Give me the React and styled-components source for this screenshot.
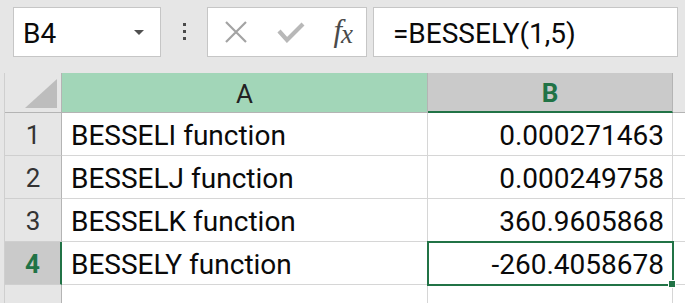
import React from "react";
import styled, { createGlobalStyle } from "styled-components";

const GREEN = "#217346";

const rows = [
  { label: "BESSELI function", value: "0.000271463" },
  { label: "BESSELJ function", value: "0.000249758" },
  { label: "BESSELK function", value: "360.9605868" },
  { label: "BESSELY function", value: "-260.4058678", active: true },
];

export default function App() {
  return (
    <Page>
      <GlobalStyle />
      <Toolbar>
        <NameBox>
          <span>B4</span>
          <Caret />
        </NameBox>
        <Grip>
          <Dot />
          <Dot />
          <Dot />
        </Grip>
        <IconBox>
          <svg width="24" height="22" viewBox="0 0 24 22">
            <path d="M2 1 L22 21 M22 1 L2 21" stroke="#a3a3a3" strokeWidth="2.2" fill="none" />
          </svg>
          <svg width="28" height="22" viewBox="0 0 28 22">
            <path d="M2 10 L10 19 L26 3" stroke="#b8b8b8" strokeWidth="4.2" fill="none" />
          </svg>
          <Fx>
            f<X>x</X>
          </Fx>
        </IconBox>
        <FormulaInput>=BESSELY(1,5)</FormulaInput>
      </Toolbar>

      <Sheet>
        <Corner>
          <svg width="32" height="29" viewBox="0 0 32 29">
            <polygon points="32,0 32,29 0,29" fill="#bdbdbd" />
          </svg>
        </Corner>
        <ColHeader $tone="green">A</ColHeader>
        <ColHeader $tone="selected">B</ColHeader>
        <ColHeader />

        {rows.map((row, i) => (
          <React.Fragment key={row.label}>
            <RowHeader $active={row.active}>{i + 1}</RowHeader>
            <Cell>{row.label}</Cell>
            <Cell $num $active={row.active}>
              {row.value}
              {row.active && <FillHandle />}
            </Cell>
            <Cell />
          </React.Fragment>
        ))}

        <RowHeader />
        <Cell />
        <Cell />
        <Cell />
      </Sheet>
    </Page>
  );
}

const GlobalStyle = createGlobalStyle`
  html, body {
    margin: 0;
    padding: 0;
    overflow: hidden;
  }
  body {
    font-family: Roboto, "Liberation Sans", sans-serif;
  }
`;

const Page = styled.div`
  width: 685px;
  height: 303px;
  overflow: hidden;
  background: #e6e6e6;
`;

const Toolbar = styled.div`
  display: flex;
  height: 50px;
  padding: 7px 7px 0 13px;
  margin-bottom: 16px;
`;

const Box = styled.div`
  box-sizing: border-box;
  height: 50px;
  background: #fff;
  border: 1px solid #c6c6c6;
  display: flex;
  align-items: center;
`;

const NameBox = styled(Box)`
  width: 148px;
  padding: 2px 16px 0 9px;
  justify-content: space-between;
  font-size: 28px;
  color: #0a0a0a;
`;

const Caret = styled.div`
  width: 0;
  height: 0;
  border-left: 5px solid transparent;
  border-right: 5px solid transparent;
  border-top: 5px solid #505050;
  margin-top: -2px;
`;

const Grip = styled.div`
  width: 46px;
  display: flex;
  flex-direction: column;
  align-items: center;
  justify-content: center;
  gap: 4px;
  padding-bottom: 2px;
`;

const Dot = styled.div`
  width: 3px;
  height: 3px;
  background: #4a4a4a;
`;

const IconBox = styled(Box)`
  width: 160px;
  padding: 0 14px 0 16px;
  justify-content: space-between;
`;

const Fx = styled.span`
  font-family: "Liberation Serif", "DejaVu Serif", serif;
  font-style: italic;
  font-size: 31px;
  color: #4a4a4a;
  line-height: 1;
  margin-top: -4px;
  letter-spacing: -1px;
`;

const X = styled.span`
  font-size: 27px;
  position: relative;
  top: 2px;
`;

const FormulaInput = styled(Box)`
  margin-left: 6px;
  flex: 1;
  padding: 2px 0 0 19px;
  font-size: 28px;
  color: #0a0a0a;
`;

const Sheet = styled.div`
  display: grid;
  grid-template-columns: 57px 366px 245px 1fr;
  grid-template-rows: 40px repeat(5, 43px);
  margin-left: 4px;
  border-left: 1px solid #cfcfcf;
  background: #fff;
`;

const HeaderBase = styled.div`
  box-sizing: border-box;
  display: flex;
  align-items: center;
  justify-content: center;
  border-right: 1px solid #b4b4b4;
  border-bottom: 1px solid #b4b4b4;
  background: #e6e6e6;
`;

const Corner = styled(HeaderBase)`
  justify-content: flex-end;
  align-items: flex-end;
  padding: 0 4px 4px 0;
`;

const ColHeader = styled(HeaderBase)`
  font-size: 26px;
  color: #222;
  padding-top: 2px;
  ${({ $tone }) =>
    $tone === "green" &&
    `
    background: #a2d6b8;
  `}
  ${({ $tone }) =>
    $tone === "selected" &&
    `
    background: #cacaca;
    color: ${GREEN};
    font-weight: 700;
    border-bottom: 2px solid ${GREEN};
  `}
`;

const RowHeader = styled(HeaderBase)`
  font-size: 26px;
  color: #333;
  padding-top: 2px;
  border-bottom-color: #cfcfcf;
  ${({ $active }) =>
    $active &&
    `
    background: #cacaca;
    color: ${GREEN};
    font-weight: 700;
    border-right: 2px solid ${GREEN};
  `}
`;

const Cell = styled.div`
  position: relative;
  box-sizing: border-box;
  display: flex;
  align-items: center;
  justify-content: ${({ $num }) => ($num ? "flex-end" : "flex-start")};
  padding: 3px 8px 0 9px;
  border-right: 1px solid #d6d6d6;
  border-bottom: 1px solid #d6d6d6;
  font-size: 28px;
  color: #0a0a0a;
  white-space: nowrap;
  ${({ $active }) =>
    $active &&
    `
    outline: 2px solid ${GREEN};
    outline-offset: -1px;
    z-index: 1;
  `}
`;

const FillHandle = styled.div`
  position: absolute;
  right: -4px;
  bottom: -4px;
  width: 6px;
  height: 6px;
  background: ${GREEN};
  border: 1px solid #fff;
`;
